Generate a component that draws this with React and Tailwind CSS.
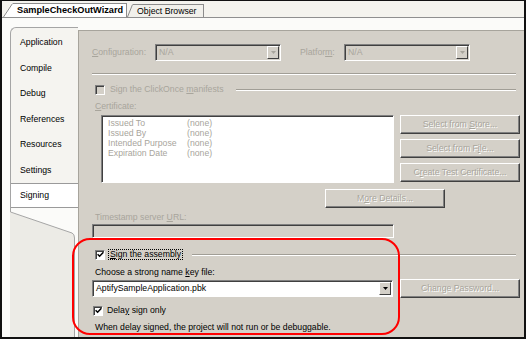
import React from 'react'

const dis = 'text-[#a8a59c]'
const emb = '[text-shadow:1px_1px_0_#ffffff]'

function Check({ checked, disabled }) {
  return (
    <span
      className={`flex h-[10px] w-[10px] shrink-0 items-center justify-center border border-t-[#808080] border-l-[#808080] border-b-white border-r-white shadow-[inset_1px_1px_0_#404040] ${
        disabled ? 'bg-[#d4d0c8]' : 'bg-white'
      }`}
    >
      {checked && (
        <svg width="7" height="7" viewBox="0 0 7 7">
          <path d="M0.6 3.2 L2.6 5.2 L6.4 1.2" fill="none" stroke="#000" strokeWidth="1.5" />
        </svg>
      )}
    </span>
  )
}

function Btn({ children, className = '' }) {
  return (
    <div
      className={`flex h-[19px] w-[120px] items-center justify-center border border-t-white border-l-white border-b-[#404040] border-r-[#404040] bg-[#d4d0c8] shadow-[inset_-1px_-1px_0_#808080] ${dis} ${emb} ${className}`}
    >
      {children}
    </div>
  )
}

function Combo({ text, disabled, className = '' }) {
  return (
    <div
      className={`flex h-[17px] items-center border border-t-[#808080] border-l-[#808080] border-b-white border-r-white shadow-[inset_1px_1px_0_#404040] ${
        disabled ? 'bg-[#d4d0c8]' : 'bg-white'
      } ${className}`}
    >
      <span className={`flex-1 pl-[3px] ${disabled ? dis : 'text-black'}`}>{text}</span>
      <span className="mr-[1px] flex h-[13px] w-[12px] items-center justify-center border border-t-white border-l-white border-b-[#404040] border-r-[#404040] bg-[#d4d0c8]">
        <svg width="5" height="3" viewBox="0 0 5 3">
          <path d="M0 0h5L2.5 3z" fill={disabled ? '#a8a59c' : '#000'} />
        </svg>
      </span>
    </div>
  )
}

function Etched({ className = '' }) {
  return <div className={`h-[2px] border-t border-b border-t-[#a19e96] border-b-white ${className}`} />
}

const navItems = ['Application', 'Compile', 'Debug', 'References', 'Resources', 'Settings']

export default function App() {
  return (
    <div className="relative h-[353px] w-[528px] bg-white font-['Liberation_Sans',Arial,sans-serif] text-[8.7px] leading-[11px] text-black">
      <div className="flex h-[339px] w-[526px] flex-col border-x-2 border-t border-b-2 border-[#111111] bg-[#f4f3ee]">
        {/* document tabs */}
        <div className="flex h-[17px] shrink-0 items-end border-b border-[#8f8f8f] pl-[1px]">
          <svg width="10" height="14" viewBox="0 0 10 14" className="shrink-0">
            <path d="M0 14 L9 0 L10 0 L10 14 Z" fill="#ffffff" />
            <path d="M0.5 14 L9.5 0.5" stroke="#8c8c8c" fill="none" />
          </svg>
          <div className="flex h-[14px] items-center border-t border-r border-[#8c8c8c] bg-white pl-[4px] pr-[3px] text-[9.2px] font-bold">
            SampleCheckOutWizard
          </div>
          <svg width="6" height="13" viewBox="0 0 6 13" className="shrink-0">
            <path d="M0 13 L5 0 L6 0 L6 13 Z" fill="#f1f0eb" />
            <path d="M0.5 13 L5.5 0.5" stroke="#8c8c8c" fill="none" />
          </svg>
          <div className="flex h-[13px] items-center border-t border-r border-[#8c8c8c] bg-[#f1f0eb] pl-[4px] pr-[6px]">
            Object Browser
          </div>
        </div>

        <div className="flex flex-1 bg-[#fbfbf9]">
          {/* property page nav */}
          <div className="ml-[8px] mt-[9px] flex w-[68px] shrink-0 flex-col">
            <div className="flex flex-col rounded-tl-[6px] border-l border-t border-[#a5a5a5] bg-[#f5f4f0] pt-[2px]">
              {navItems.map((n) => (
                <div key={n} className="flex h-[25.5px] items-center pl-[9px]">
                  {n}
                </div>
              ))}
              <div className="flex h-[25px] items-center border-y border-[#9a9a9a] bg-white pl-[9px]">Signing</div>
            </div>
            <svg width="68" height="129" viewBox="0 0 68 129" className="shrink-0">
              <path d="M0 4 L62 25 Q64.5 26 64.5 30 L64.5 129 L0 129 Z" fill="#ecebe6" />
              <path d="M0.5 0 L0.5 4 L62 25 Q64.5 26 64.5 30 L64.5 129" stroke="#a5a5a5" fill="none" />
            </svg>
          </div>

          {/* signing page */}
          <div className="mt-[12px] flex flex-1 flex-col border-l border-t border-[#a7a49c] bg-[#d4d0c8] pl-[13px] pr-[3px]">
            <div className="mt-[12px] flex h-[18px] items-center">
              <span className={`w-[63px] ${dis}`}>
                <u>C</u>onfiguration:
              </span>
              <Combo text="N/A" disabled className="w-[126px]" />
              <span className={`ml-[19px] w-[44px] ${dis}`}>
                Platfor<u>m</u>:
              </span>
              <Combo text="N/A" disabled className="w-[126px]" />
            </div>

            <Etched className="mt-[12px] mr-[5px]" />

            <div className="mt-[9px] flex h-[11px] items-center pl-[3px]">
              <Check disabled />
              <span className={`ml-[5px] ${dis}`}>
                Sign the ClickOnce <u>m</u>anifests
              </span>
              <Etched className="ml-[12px] mr-[5px] flex-1" />
            </div>

            <div className={`mt-[6px] h-[11px] pl-[3px] ${dis}`}>
              <u>C</u>ertificate:
            </div>

            <div className="mt-[3px] flex">
              <div className={`ml-[9px] flex h-[68px] w-[293px] flex-col border border-t-[#808080] border-l-[#808080] border-b-white border-r-white bg-white pl-[6px] pt-[2px] shadow-[inset_1px_1px_0_#404040] leading-[10px] ${dis}`}>
                {['Issued To', 'Issued By', 'Intended Purpose', 'Expiration Date'].map((k) => (
                  <div key={k} className="flex">
                    <span className="w-[79px]">{k}</span>
                    <span>(none)</span>
                  </div>
                ))}
              </div>
              <div className="ml-[6px] flex flex-col gap-[5px]">
                <Btn>
                  Select from&nbsp;<u>S</u>tore...
                </Btn>
                <Btn>
                  Select from F<u>i</u>le...
                </Btn>
                <Btn>
                  C<u>r</u>eate Test Certificate...
                </Btn>
              </div>
            </div>

            <Btn className="ml-[233px] mt-[6px] w-[70px]">
              M<u>o</u>re Details...
            </Btn>

            <div className={`mt-[4px] h-[11px] pl-[3px] ${dis}`}>
              Timestamp server <u>U</u>RL:
            </div>
            <div className="mt-[1px] h-[14px] w-[302px] border border-t-[#808080] border-l-[#808080] border-b-white border-r-white bg-[#d4d0c8] shadow-[inset_1px_1px_0_#404040]" />

            <div className="mt-[11px] flex h-[11px] items-center pl-[3px]">
              <Check checked />
              <span className="ml-[3px] border border-dotted border-black px-[1px] leading-[9px]">
                <u>S</u>ign the assembly
              </span>
              <Etched className="ml-[9px] mr-[5px] flex-1" />
            </div>

            <div className="mt-[7px] h-[11px] pl-[3px]">
              Choose a strong name <u>k</u>ey file:
            </div>

            <div className="mt-[1px] flex h-[19px] items-center">
              <Combo text="AptifySampleApplication.pbk" className="w-[301px]" />
              <Btn className="ml-[7px]">Change Password...</Btn>
            </div>

            <div className="mt-[7px] flex h-[11px] items-center pl-[1px]">
              <Check checked />
              <span className="ml-[4px]">
                Dela<u>y</u> sign only
              </span>
            </div>

            <div className="mt-[6px] h-[11px] pl-[3px]">
              When delay signed, the project will not run or be debuggable.
            </div>
          </div>
        </div>
      </div>

      {/* red annotation */}
      <div className="absolute left-[72px] top-[238px] h-[97px] w-[328px] rounded-[18px] border-2 border-[#ff0000]" />
    </div>
  )
}
